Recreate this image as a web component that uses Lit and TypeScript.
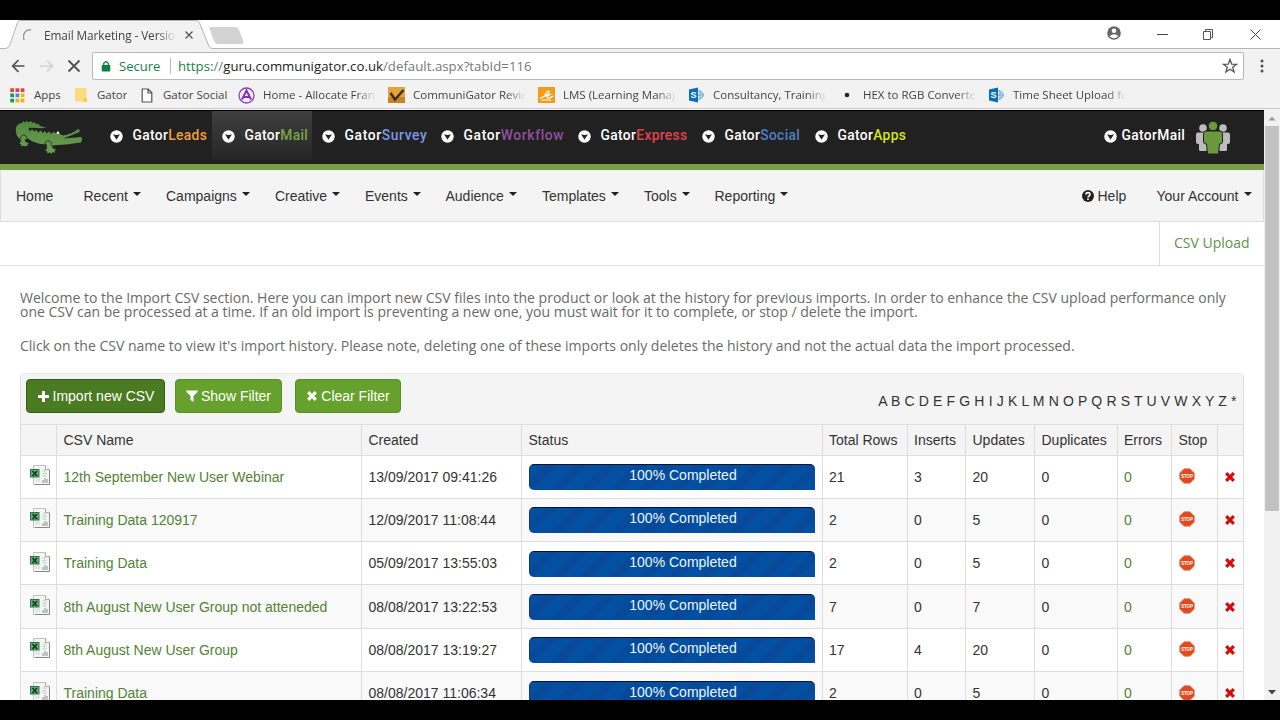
import { LitElement, html, css, svg } from "lit";
import { customElement } from "lit/decorators.js";

const gator = html`<svg class="gator" width="70" height="36" viewBox="0 0 70 36">
  <defs><linearGradient id="g" x1="0" y1="0" x2="0" y2="1"><stop offset="0" stop-color="#4f8a3c"/><stop offset="1" stop-color="#6f9c55"/></linearGradient></defs>
  <path fill="url(#g)" d="M2 11C1 6 5 3 8 3l1.500-2L11 2.600 13 .8l1.500 1.600L17 1l1.500 2L21 2.200l1 2 2.500-.4L26 6l6 1.500-4 .8-11-.6c-3 0-3 2-.5 3.500L18 9l2 2.500L22.500 10l1.500 2.500L27 10.500l1.500 2.500 2.500-2 1.500 2.500 3-2 1.500 2.500 3-2.500 1 2c2-1.500 4-1 5 .5l3 1.500c6-1 11-3 15-6.500l1.500.5V12l-16 6.500L67.500 17l.5 3-1 2.500c-8 1-17 2.500-25 2.500l-4 .8c0 2 1 3 4 4l-1.500 1.200.5 1.800-2.500-.8-.8 2-2-1.500-2.500.8v-2l-2.200-1 2-1.500-.2-4.500c-8 0-14-2-19-6l-3 1.500c0 2 1 2.500 4 3.500l-1.500 1.500.5 1.500-2.500-.5-1 1-1.500-1.200-2 .6.3-2L5 23l2.500-1.500L6 19c-3-2-4-5-4-8z"/>
  <path fill="none" stroke="#223420" stroke-width=".9" d="M6.500 19c0-4 3-5 5.500-3l1 2M31 27c-1-4 1-7 4-6s3 3 2 5"/>
  <circle cx="44" cy="12.800" r="1.200" fill="#fff"/></svg>`;

const chev = html`<svg class="chev" width="13" height="13" viewBox="0 0 13 13"><circle cx="6.500" cy="6.500" r="6.200" fill="#fff"/><path d="M3 4.200q3.500 1.600 7 0L6.500 9.800z" fill="#222"/></svg>`;

const cross = "M1 3 3 1l2.500 2.500L8 1l2 2-2.500 2.500L10 8l-2 2-2.500-2.500L3 10 1 8l2.500-2.500z";

const excel = html`<svg width="20" height="20" viewBox="0 0 20 20">
  <path d="M3.500.5h12l4 4v15h-16z" fill="#f4f6f4" stroke="#c0c4c0"/>
  <path d="M19.500 5v14.500H5" fill="none" stroke="#888"/><path d="M15.500.5v4h4" fill="#fff" stroke="#aaa"/>
  <path d="M12 6h5M12 8.500h5M12 11h5M5 16h5M5 14h5M14.500 4v8" stroke="#d2d7d2"/>
  <path d="M13 18v-3m2 3v-5m2 5v-4" stroke="#a2a8ac" stroke-width="1.300"/>
  <rect x="0" y="4" width="9.500" height="8.500" fill="#2d7a3f"/><rect x="1" y="5" width="7.500" height="6.500" fill="#69a877"/>
  <path d="m2.500 6 4.500 5M7 6l-4.500 5" stroke="#123f1e" stroke-width="1.700"/></svg>`;

const stop = html`<svg width="16" height="16" viewBox="0 0 16 16">
  <path d="M5 .7h6L15.300 5v6L11 15.300H5L.7 11V5z" fill="#e04a20" stroke="#e88468" stroke-width=".8"/>
  <text class="stoptext" x="8" y="10" text-anchor="middle" textLength="11.500" lengthAdjust="spacingAndGlyphs">STOP</text></svg>`;

const sharepoint = html`<svg width="17" height="16" viewBox="0 0 17 16">
  <path d="M10 3l6 5-6 5M12 4.500v7M9 8h6" fill="none" stroke="#5aa4d8"/>
  <circle cx="11" cy="8" r="4.500" fill="none" stroke="#8cc0e4" stroke-width=".8"/>
  <path d="M1 2.500 10 .5v15L1 13.500z" fill="#0a6ebd"/><text class="sp" x="2.600" y="11.300">S</text></svg>`;

const marks: Record<string, unknown> = {
  apps: html`<svg width="15" height="15" viewBox="0 0 15 15">${[0, 1, 2].map((r) => [0, 1, 2].map((c) => svg`<rect x=${c * 5.2 + 0.3} y=${r * 5.2 + 0.3} width="3.700" height="3.700" fill=${[["#db4437", "#db4437", "#db4437"], ["#0f9d58", "#4285f4", "#f4b400"], ["#0f9d58", "#f4b400", "#f4b400"]][r][c]}/>`))}</svg>`,
  folder: html`<svg width="14" height="16" viewBox="0 0 14 16"><path d="M1 1h11.500v13.500H1z" fill="#fbdc7d"/><path d="M9.500 15v-3l2-1.500 1.500 1V15z" fill="#f5cb50"/></svg>`,
  page: html`<svg width="12" height="15" viewBox="0 0 12 15"><path d="M1.200 1h6l3.600 3.600V14H1.200zM7 1v4h4" fill="#fff" stroke="#555" stroke-width="1.200"/></svg>`,
  allocate: html`<svg width="17" height="17" viewBox="0 0 17 17"><circle cx="8.500" cy="8.500" r="7.500" fill="#f7effb" stroke="#8e3fc4" stroke-width="1.300"/><path d="m4 12.500 4.500-9 4.500 9M6 10h5" fill="none" stroke="#7e35b5" stroke-width="2"/></svg>`,
  review: html`<svg width="17" height="16" viewBox="0 0 17 16"><rect width="17" height="16" fill="#e5a33a"/><path d="M0 10h17v6H0z" fill="#c58428"/><path d="m2.500 6 4.500 6.500L15.500 3" fill="none" stroke="#3c3222" stroke-width="2.600"/></svg>`,
  lms: html`<svg width="17" height="16" viewBox="0 0 17 16"><rect width="17" height="16" fill="#f39b1b"/><path d="M2 11c5-1 9-4 9-7-3 0-5 5-3 5s5-2 5-2-5 1-4 3 5 0 6-1M3 13h10" fill="none" stroke="#fff" stroke-width="1.200"/></svg>`,
  sp: sharepoint,
  dot: html`<svg width="8" height="16" viewBox="0 0 8 16"><circle cx="4" cy="8" r="2.300" fill="#222"/></svg>`,
};

const bookmarks: [string, string][] = [["apps", "Apps"], ["folder", "Gator"], ["page", "Gator Social"], ["allocate", "Home - Allocate Frank"], ["review", "CommuniGator Review"], ["lms", "LMS (Learning Manage"], ["sp", "Consultancy, Training a"], ["dot", "HEX to RGB Converter"], ["sp", "Time Sheet Upload for"]];
const products = ["Leads", "Mail", "Survey", "Workflow", "Express", "Social", "Apps"];
const menus = ["Home", "Recent", "Campaigns", "Creative", "Events", "Audience", "Templates", "Tools", "Reporting"];
const heads = ["", "CSV Name", "Created", "Status", "Total Rows", "Inserts", "Updates", "Duplicates", "Errors", "Stop", ""];
const rows = [
  ["12th September New User Webinar", "13/09/2017 09:41:26", "21", "3", "20"],
  ["Training Data 120917", "12/09/2017 11:08:44", "2", "0", "5"],
  ["Training Data", "05/09/2017 13:55:03", "2", "0", "5"],
  ["8th August New User Group not atteneded", "08/08/2017 13:22:53", "7", "0", "7"],
  ["8th August New User Group", "08/08/2017 13:19:27", "17", "4", "20"],
  ["Training Data", "08/08/2017 11:06:34", "2", "0", "5"],
];

@customElement("browser-chrome")
class BrowserChrome extends LitElement {
  static styles = css`
    :host { display: block; height: 90px; background: #f2f2f2; font-family: "Open Sans", sans-serif; color: #444; }
    * { box-sizing: border-box; }
    svg { display: block; flex: none; }
    .strip { position: relative; height: 29px; display: grid; grid-template-columns: 1104px 48px 46px 48px 34px; background: #fff; }
    .shape { position: absolute; left: 0; top: 0; }
    .tab { position: relative; display: grid; grid-template-columns: 21px 135px 20px; padding: 0 0 0 23px; align-items: center; height: 29px; }
    .title { font-size: 11.800px; white-space: nowrap; overflow: hidden; letter-spacing: -.08px; mask-image: linear-gradient(90deg, #000 84%, transparent 98%); }
    .wc { position: relative; align-self: center; }
    .bar { height: 35px; padding: 3px 0 4px 11px; display: grid; grid-template-columns: 28px 28px 25px 1152px 36px; align-items: center; }
    .omni { height: 28px; border: 1px solid #b8b8b8; border-radius: 2px; background: #fff; display: grid; grid-template-columns: 18px 44px 15px 1fr 21px; align-items: center; padding-left: 8px; font-size: 13.200px; white-space: nowrap; }
    .green { color: #16814a; }
    .secure { font-size: 13px; }
    .rule { width: 1px; height: 16px; background: #bbb; margin-left: 7px; }
    .url { letter-spacing: .03px; color: #777; }
    .url b { font-weight: 400; color: #222; }
    .marks { height: 25px; display: grid; grid-template-columns: 63px 66px 100px 150px 150px 150px 150px 150px 140px; padding: 0 0 2px 9px; align-items: center; border-bottom: 1px solid #ccc; }
    .mark { display: grid; grid-template-columns: 17px 1fr; column-gap: 8px; align-items: center; white-space: nowrap; font-size: 11.500px; justify-items: center; }
    .mark span { justify-self: start; max-width: 113px; overflow: hidden; line-height: 18px; }
    .fade { mask-image: linear-gradient(90deg, #000 83%, transparent 100%); }
    .sp { font: bold 9px "Liberation Sans", sans-serif; fill: #fff; }
  `;
  render() {
    return html`
      <div class="strip">
        <svg class="shape" width="1280" height="29" viewBox="0 0 1280 29"><path d="M-2 28.500h7c3 0 4-2 5-4L17 4c1-3 2-3.500 4-3.500h174c3 0 4 1 5 3.500l8 20c1 3 2 4.500 5 4.500h1069v2H-2z" fill="#f2f2f2" stroke="#b4b4b4"/><path d="M211 7h24c2 0 3 1 4 3l4 10c1 3 0 4-3 4h-21c-3 0-4-1-5-3l-4-11c-1-2-1-3 1-3z" fill="#d2d2d2"/></svg>
        <div class="tab">
          <svg width="12" height="14" viewBox="0 0 12 14"><path d="M1 12C-1 6 3 1 8 2" fill="none" stroke="#999" stroke-width="1.500"/></svg>
          <span class="title">Email Marketing - Version 4</span>
          <svg width="20" height="10" viewBox="0 0 20 10"><path d="m6.500 1.500 7 7m0-7-7 7" stroke="#555" stroke-width="1.300"/></svg>
        </div>
        <svg class="wc" width="20" height="20" viewBox="0 0 20 20"><circle cx="10" cy="8" r="6.800" fill="#666"/><circle cx="10" cy="5.800" r="2.300" fill="#fff"/><path d="M5.500 11.200q4.500-3.800 9 0-4.500 4-9 0" fill="#fff"/></svg>
        <svg class="wc" width="20" height="20" viewBox="0 0 20 20"><path d="M5 9.500h11" stroke="#444"/></svg>
        <svg class="wc" width="20" height="20" viewBox="0 0 20 20"><path d="M5.500 6.500h7v8h-7zM7.500 6v-1.500h7v8H13" fill="none" stroke="#555"/></svg>
        <svg class="wc" width="20" height="20" viewBox="0 0 20 20"><path d="m4.500 4.500 10 10m0-10-10 10" stroke="#444"/></svg>
      </div>
      <div class="bar">
        <svg width="16" height="16" viewBox="0 0 16 16"><path d="M13.500 8H2m5.500-6L1.700 8l5.800 6" fill="none" stroke="#505050" stroke-width="1.700"/></svg>
        <svg width="16" height="16" viewBox="0 0 16 16"><path d="M1 8h12M8 2.500 13.500 8 8 13.500" fill="none" stroke="#d2d2d2" stroke-width="1.700"/></svg>
        <svg width="16" height="16" viewBox="0 0 16 16"><path d="m1.500 2.500 11 11m0-11-11 11" stroke="#505050" stroke-width="1.800"/></svg>
        <div class="omni">
          <svg width="10" height="13" viewBox="0 0 10 13"><rect x=".7" y="5" width="8.600" height="6.500" rx=".8" fill="#0b8043"/><path d="M2.700 5V3.500q2.300-3.500 4.600 0V5" fill="none" stroke="#0b8043" stroke-width="1.300"/></svg>
          <span class="green secure">Secure</span><span class="rule"></span>
          <span class="url"><span class="green">https:</span>//<b>guru.communigator.co.uk</b>/default.aspx?tabId=116</span>
          <svg width="16" height="16" viewBox="0 0 16 16"><path d="m8 1.500 1.700 4.600 4.900.2-3.900 3 1.400 4.700L8 11.300 3.900 14l1.400-4.700-3.900-3 4.900-.2z" fill="none" stroke="#555" stroke-width="1.300"/></svg>
        </div>
        <svg width="36" height="16" viewBox="0 0 36 16"><g fill="#505050"><circle cx="18" cy="3" r="1.500"/><circle cx="18" cy="8" r="1.500"/><circle cx="18" cy="13" r="1.500"/></g></svg>
      </div>
      <div class="marks">${bookmarks.map(([i, t], n) => html`<div class="mark">${marks[i]}<span class=${n > 2 ? "fade" : ""}>${t}</span></div>`)}</div>`;
  }
}

@customElement("product-bar")
class ProductBar extends LitElement {
  static styles = css`
    :host { display: block; box-sizing: border-box; height: 60px; background: #212121; border-bottom: 6px solid #7b9d49; border-top: 1px solid #000; font: 500 13.800px Roboto, sans-serif; letter-spacing: .35px; color: #fff; }
    * { box-sizing: border-box; }
    svg { display: block; flex: none; }
    .row { display: grid; grid-template-columns: 110px 102px 110px 119px 137px 124px 113px 288.500px 88px 40px; height: 53px; }
    .logo { padding: 9px 0 0 14px; }
    .prod { display: flex; gap: 9.500px; padding: 0 0 1px 0; align-items: center; white-space: nowrap; height: 49px; }
    .chev { margin-top: 2px; }
    .Mail { background: linear-gradient(#3f3f3f, #262626); padding-left: 10px; margin-right: 10px; }
    .Leads i { color: #f0a041; } .Mail i { color: #78a847; } .Survey i { color: #7c98ea; } .Workflow i { color: #90509e; }
    .Survey, .Workflow { letter-spacing: .65px; }
    .Express i { color: #e04450; } .Social i { color: #4c80c6; } .Apps i { color: #d4e51c; }
    b { font-weight: 500; color: #fff; } i { font-style: normal; }
    .brand { gap: 5px; }
    .people { padding: 10px 0 0 3px; }
  `;
  render() {
    return html`<div class="row"><div class="logo">${gator}</div>
      ${products.map((p) => html`<div class="prod ${p}">${chev}<span><b>Gator</b><i>${p}</i></span></div>`)}
      <div class="prod brand">${chev}<b>GatorMail</b></div>
      <div class="people"><svg width="36" height="34" viewBox="0 0 36 34">
        <g fill="#bcbcbc"><circle cx="8" cy="7" r="3.800"/><circle cx="28" cy="7" r="3.800"/><rect x="1" y="11.500" width="10" height="11.500" rx="2"/><rect x="25" y="11.500" width="10" height="11.500" rx="2"/><rect x="4" y="14" width="8" height="16" rx="1.500"/><rect x="24" y="14" width="8" height="16" rx="1.500"/></g>
        <g fill="#6b983d" stroke="#212121"><path d="M11 10h14q2.500 0 2.500 2.500V21q0 2-3 2l-1 10h-11l-1-10q-3 0-3-2v-8.500Q8.500 10 11 10z"/><circle cx="18" cy="5" r="4.800"/></g></svg></div></div>`;
  }
}

@customElement("app-root")
class AppRoot extends LitElement {
  static styles = css`
    :host { display: flex; flex-direction: column; width: 1280px; height: 720px; padding: 20px 0; background: #000; overflow: hidden; box-sizing: border-box; font: 14px "Liberation Sans", sans-serif; color: #333; }
    * { box-sizing: border-box; }
    svg { display: block; flex: none; }
    .body { flex: 1; min-height: 0; display: grid; grid-template-columns: 1264px 16px; background: #fff; }
    .page { overflow: hidden; min-height: 0; min-width: 0; }
    .scroll { background: #f1f1f1; display: flex; flex-direction: column; align-items: center; justify-content: space-between; }
    .thumb { width: 14px; height: 385px; background: #c1c1c1; margin-bottom: auto; }
    .nav { height: 52px; background: #f4f4f4; border: 1px solid #ddd; border-top-color: #eef3e6; display: grid; grid-template-columns: 67.500px 82.500px 109px 90px 80.500px 96.500px 102px 70.500px 367px 75px 106px; padding: 0 0 1px 15px; align-items: center; white-space: nowrap; }
    .item { display: flex; align-items: center; gap: 4px; }
    .caret { border: 4px solid transparent; border-top-color: #222; border-bottom: 0; margin-top: -4px; margin-left: 1px; }
    .sub { height: 44px; border-bottom: 1px solid #ddd; display: flex; justify-content: flex-end; }
    .crumb { width: 105px; border-left: 1px solid #ddd; font: 14px/42px "Open Sans", sans-serif; color: #62934c; padding-left: 14px; white-space: nowrap; }
    .intro { font: 14.020px/14px "Open Sans", sans-serif; color: #6a6a6a; padding: 25px 20px 0; height: 107px; white-space: nowrap; }
    .intro p { margin: 0 0 20px; }
    .panel { margin: 0 20px; border: 1px solid #ddd; border-top-color: #eaeaea; border-radius: 4px 4px 0 0; width: 1223.500px; border-bottom: 0; }
    .tools { height: 50px; background: #f4f4f4; padding: 5px 5px; display: flex; align-items: flex-start; }
    .btn { height: 34px; display: flex; align-items: center; justify-content: center; gap: 3px; color: #fff; background: #65a12c; border: 1px solid #598f25; border-radius: 4px; white-space: nowrap; }
    .b0 { width: 139px; background: #4a7b22; border-color: #365d16; margin-right: 10px; }
    .b1 { width: 107px; margin-right: 13px; } .b2 { width: 106px; }
    .alpha { margin: 14px 1px 0 auto; white-space: nowrap; letter-spacing: .145px; }
    .tr { display: grid; grid-template-columns: 35px 305px 160px 300.500px 85px 58.500px 69px 82.500px 54.500px 45.500px 26px; height: 43.330px; border-top: 1px solid #ddd; }
    .td { display: flex; align-items: center; padding-left: 6.500px; border-left: 1px solid #ddd; white-space: nowrap; min-width: 0; }
    .td:first-child { border-left: 0; padding-left: 9px; }
    .icon { padding-bottom: 3px; }
    .stopcell { padding-bottom: 1px; }
    .odd { background: #f9f9f9; }
    .head { height: 30.500px; background: #f4f4f4; }
    .link { color: #528336; }
    .progress { width: 286px; height: 26px; margin-top: 1px; border-radius: 5px 5px 0 5px; border-top: 1.500px solid #04152c; border-left: 1px solid #0b3a75; background: repeating-linear-gradient(135deg, #0350a2 0 9px, #08499a 12px 18px, #0350a2 21px); color: #e9f5fb; display: flex; justify-content: center; padding-left: 22px; line-height: 21px; }
    .stoptext { font: bold 5px "Liberation Sans", sans-serif; fill: #fff; }
  `;
  render() {
    return html`<browser-chrome></browser-chrome>
      <div class="body"><div class="page">
        <product-bar></product-bar>
        <div class="nav">${menus.map((m, i) => html`<span class="item">${m}${i ? html`<span class="caret"></span>` : ""}</span>`)}
          <span class="item"><svg width="12" height="12" viewBox="0 0 12 12"><circle cx="6" cy="6" r="6" fill="#222"/><path d="M4 4.500C4 2 8 2 8 4.500 8 6 6 6 6 7.500M6 8.500v1.500" fill="none" stroke="#fff" stroke-width="1.600"/></svg>Help</span>
          <span class="item">Your Account<span class="caret"></span></span></div>
        <div class="sub"><div class="crumb">CSV Upload</div></div>
        <div class="intro"><p>Welcome to the Import CSV section. Here you can import new CSV files into the product or look at the history for previous imports. In order to enhance the CSV upload performance only<br>one CSV can be processed at a time. If an old import is preventing a new one, you must wait for it to complete, or stop / delete the import.</p><p>Click on the CSV name to view it's import history. Please note, deleting one of these imports only deletes the history and not the actual data the import processed.</p></div>
        <div class="panel"><div class="tools">
            <div class="btn b0"><svg width="13" height="13" viewBox="0 0 13 13"><path d="M5 1h3v4h4v3H8v4H5V8H1V5h4z" fill="#fff"/></svg>Import new CSV</div>
            <div class="btn b1"><svg width="12" height="12" viewBox="0 0 12 12"><path d="M.3.500h11.400v1.300L7.500 6v6l-3-2V6L.3 1.800z" fill="#fff"/></svg>Show Filter</div>
            <div class="btn b2"><svg width="12" height="12" viewBox="0 0 11 11"><path d=${cross} fill="#fff"/></svg>Clear Filter</div>
            <div class="alpha">A B C D E F G H I J K L M N O P Q R S T U V W X Y Z *</div></div>
          <div class="tr head">${heads.map((h) => html`<div class="td">${h}</div>`)}</div>
          ${rows.map((r, i) => html`<div class="tr ${i % 2 ? "odd" : ""}">
            <div class="td icon">${excel}</div><div class="td link">${r[0]}</div><div class="td">${r[1]}</div>
            <div class="td"><div class="progress">100% Completed</div></div>
            <div class="td">${r[2]}</div><div class="td">${r[3]}</div><div class="td">${r[4]}</div><div class="td">0</div><div class="td link">0</div>
            <div class="td stopcell">${stop}</div><div class="td"><svg width="12" height="12" viewBox="0 0 11 11"><path d=${cross} fill="#d50b0b"/></svg></div></div>`)}
        </div></div>
        <div class="scroll"><svg width="16" height="16" viewBox="0 0 16 16"><path d="m4.500 10.500 3.500-4 3.500 4z" fill="#999"/></svg><div class="thumb"></div><svg width="16" height="16" viewBox="0 0 16 16"><path d="m4 6 4 4.500L12 6z" fill="#444"/></svg></div>
      </div>`;
  }
}
